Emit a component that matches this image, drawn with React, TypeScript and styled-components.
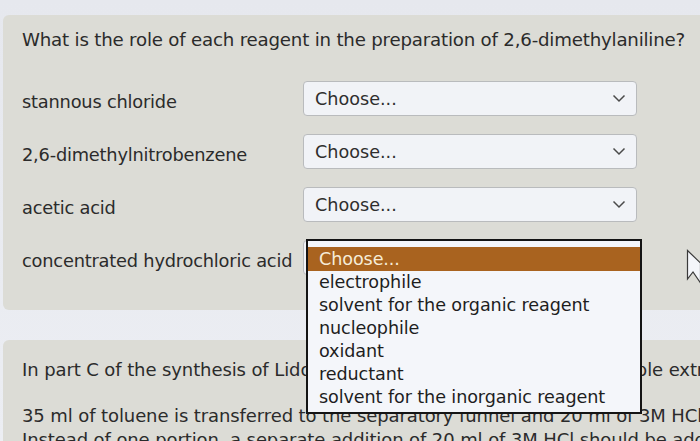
import styled, { createGlobalStyle } from "styled-components";

const GlobalStyle = createGlobalStyle`
  html, body {
    margin: 0;
    padding: 0;
    background: #e9ebf0;
  }
  body {
    font-family: "DejaVu Sans", Verdana, sans-serif;
    color: #2b2b2b;
  }
`;

const Page = styled.div`
  position: relative;
  width: 700px;
  height: 441px;
  overflow: hidden;
  padding: 15px 0 0 3px;
  box-sizing: border-box;
  background: linear-gradient(180deg, #e6e8ee 0%, #eceef3 100%);
`;

const Card = styled.div<{ $height: number }>`
  height: ${(p) => p.$height}px;
  box-sizing: border-box;
  background: #dcdcd6;
  border-radius: 6px 0 0 6px;
  padding: 13px 0 0 19px;
  margin-bottom: 30px;
  white-space: nowrap;
`;

const Question = styled.div`
  font-size: 18.2px;
  line-height: 24px;
  letter-spacing: -0.2px;
`;

const Rows = styled.div`
  display: flex;
  flex-direction: column;
  gap: 18px;
  margin-top: 29px;
`;

const Row = styled.div`
  display: grid;
  grid-template-columns: 281px 334px;
  align-items: center;
  height: 35px;
`;

const Label = styled.span`
  font-size: 17.8px;
  padding-top: 5px;
  letter-spacing: -0.2px;
`;

const Select = styled.div`
  position: relative;
  display: flex;
  align-items: center;
  justify-content: space-between;
  height: 35px;
  box-sizing: border-box;
  padding: 0 10px 0 11px;
  background: #f1f3f7;
  border: 1px solid #b9bbbd;
  border-radius: 4px;
  font-size: 17.6px;
  color: #2e2e2e;
`;

const Chevron = styled.svg`
  flex: none;
`;

const Options = styled.div`
  position: absolute;
  top: -2px;
  left: 2px;
  width: 336px;
  box-sizing: border-box;
  border: 2px solid #141414;
  background: #f4f6fa;
  padding: 6px 0 3px;
  z-index: 2;
`;

const Option = styled.div<{ $active?: boolean }>`
  height: ${(p) => (p.$active ? 24 : 23)}px;
  line-height: ${(p) => (p.$active ? 24 : 23)}px;
  padding-left: 11px;
  font-size: 17.6px;
  letter-spacing: -0.1px;
  background: ${(p) => (p.$active ? "#a9631f" : "transparent")};
  color: ${(p) => (p.$active ? "#f6ecd8" : "#1e1e1e")};
`;

const Paragraph = styled.div<{ $gap?: number }>`
  font-size: 18px;
  line-height: 24px;
  margin-top: ${(p) => p.$gap ?? 0}px;
  letter-spacing: -0.1px;
`;

const Pointer = styled.svg`
  position: absolute;
  left: 686px;
  top: 249px;
`;

const roles = [
  "electrophile",
  "solvent for the organic reagent",
  "nucleophile",
  "oxidant",
  "reductant",
  "solvent for the inorganic reagent",
];

const reagents = [
  "stannous chloride",
  "2,6-dimethylnitrobenzene",
  "acetic acid",
  "concentrated hydrochloric acid",
];

const App = () => {
  return (
    <Page>
      <GlobalStyle />
      <Card $height={295}>
        <Question>
          What is the role of each reagent in the preparation of 2,6-dimethylaniline?
        </Question>
        <Rows>
          {reagents.map((name, i) => (
            <Row key={name}>
              <Label>{name}</Label>
              <Select>
                <span>Choose...</span>
                <Chevron width="14" height="9" viewBox="0 0 14 9">
                  <polyline points="1.5,1.5 7,7 12.5,1.5" fill="none" stroke="#4a4a4a" strokeWidth="1.5" />
                </Chevron>
                {i === reagents.length - 1 && (
                  <Options>
                    <Option $active>Choose...</Option>
                    {roles.map((r) => (
                      <Option key={r}>{r}</Option>
                    ))}
                  </Options>
                )}
              </Select>
            </Row>
          ))}
        </Rows>
      </Card>
      <Card $height={140}>
        <Paragraph $gap={5}>
          In part C of the synthesis of Lidocaine, the amide is purified by a simple extraction.
        </Paragraph>
        <Paragraph $gap={22}>
          35 ml of toluene is transferred to the separatory funnel and 20 ml of 3M HCl is added.
        </Paragraph>
        <Paragraph>
          Instead of one portion, a separate addition of 20 ml of 3M HCl should be added, then
        </Paragraph>
      </Card>
      <Pointer width="16" height="36" viewBox="0 0 16 36">
        <path d="M1.5 1.5 L1.5 30 L7 23 L14.5 34 L14.5 20 L14.5 14 Z" fill="#f4f6fa" stroke="#3a3a3a" strokeWidth="1.2" />
      </Pointer>
    </Page>
  );
};

export default App;
